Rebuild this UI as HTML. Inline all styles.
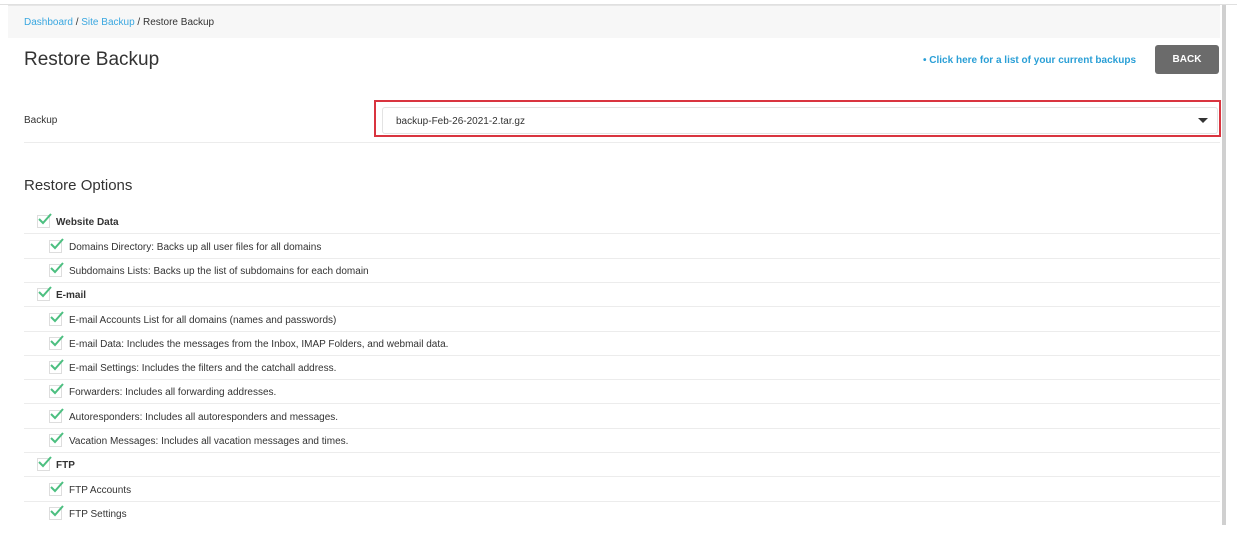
<!DOCTYPE html>
<html><head><meta charset="utf-8"><style>
body{margin:0;width:1237px;height:554px;background:#fff;font-family:"Liberation Sans",sans-serif;position:relative;overflow:hidden;color:#333}
.a{position:absolute}
.bc{left:8px;top:5px;width:1212px;height:32px;background:#f7f7f7;border-top:1px solid #e6e6e6}
.bc span{position:absolute;left:16px;top:11px;font-size:10px;color:#333}
.bc b{font-weight:normal;color:#3aa7e0}
.row{position:absolute;left:24px;width:1196px;height:24px;border-bottom:1px solid #ececec;font-size:10px;color:#333}
.cb{position:absolute;top:6px;width:11px;height:11px;border:1px solid #ddd;background:#fff}
.cb svg{position:absolute;left:0;top:-3px}
.row .t{position:absolute;top:8px}
</style></head><body>
<div class="a" style="left:0;top:4px;width:1237px;height:1px;background:#e0e0e0"></div>
<div class="a bc"><span><b>Dashboard</b> / <b>Site Backup</b> / Restore Backup</span></div>
<div class="a" style="left:1222px;top:5px;width:4px;height:520px;background:#d0d0d0"></div>
<div class="a" style="left:24px;top:49px;font-size:19px;color:#333">Restore Backup</div>
<div class="a" style="left:923px;top:55px;font-size:10px;font-weight:bold;color:#2a9fd6">• Click here for a list of your current backups</div>
<div class="a" style="left:1155px;top:45px;width:64px;height:29px;background:#6b6b6b;border-radius:3px;color:#fff;font-size:10px;font-weight:bold;text-align:center;line-height:29px">BACK</div>
<div class="a" style="left:24px;top:115px;font-size:10px">Backup</div>
<div class="a" style="left:24px;top:142px;width:1196px;height:1px;background:#ececec"></div>
<div class="a" style="left:374px;top:100px;width:847px;height:37px;border:2px solid #d9343f;box-sizing:border-box"></div>
<div class="a" style="left:382px;top:107px;width:836px;height:27px;border:1px solid #e3e3e3;border-radius:3px;box-sizing:border-box"></div>
<div class="a" style="left:396px;top:116px;font-size:10px">backup-Feb-26-2021-2.tar.gz</div>
<div class="a" style="left:1198px;top:118px;width:0;height:0;border-left:5px solid transparent;border-right:5px solid transparent;border-top:5px solid #333"></div>
<div class="a" style="left:24px;top:177px;font-size:15px;color:#333">Restore Options</div>
<div class="row" style="top:209px"><div class="cb" style="left:13px"><svg width="14" height="12"><path d="M1 6l4 4 8-9" stroke="#4cbf80" stroke-width="2" fill="none"/></svg></div><span class="t" style="left:32px;font-weight:bold">Website Data</span></div>
<div class="row" style="top:234px"><div class="cb" style="left:25px"><svg width="14" height="12"><path d="M1 6l4 4 8-9" stroke="#4cbf80" stroke-width="2" fill="none"/></svg></div><span class="t" style="left:45px">Domains Directory: Backs up all user files for all domains</span></div>
<div class="row" style="top:258px"><div class="cb" style="left:25px"><svg width="14" height="12"><path d="M1 6l4 4 8-9" stroke="#4cbf80" stroke-width="2" fill="none"/></svg></div><span class="t" style="left:45px">Subdomains Lists: Backs up the list of subdomains for each domain</span></div>
<div class="row" style="top:282px"><div class="cb" style="left:13px"><svg width="14" height="12"><path d="M1 6l4 4 8-9" stroke="#4cbf80" stroke-width="2" fill="none"/></svg></div><span class="t" style="left:32px;font-weight:bold">E-mail</span></div>
<div class="row" style="top:307px"><div class="cb" style="left:25px"><svg width="14" height="12"><path d="M1 6l4 4 8-9" stroke="#4cbf80" stroke-width="2" fill="none"/></svg></div><span class="t" style="left:45px">E-mail Accounts List for all domains (names and passwords)</span></div>
<div class="row" style="top:331px"><div class="cb" style="left:25px"><svg width="14" height="12"><path d="M1 6l4 4 8-9" stroke="#4cbf80" stroke-width="2" fill="none"/></svg></div><span class="t" style="left:45px">E-mail Data: Includes the messages from the Inbox, IMAP Folders, and webmail data.</span></div>
<div class="row" style="top:355px"><div class="cb" style="left:25px"><svg width="14" height="12"><path d="M1 6l4 4 8-9" stroke="#4cbf80" stroke-width="2" fill="none"/></svg></div><span class="t" style="left:45px">E-mail Settings: Includes the filters and the catchall address.</span></div>
<div class="row" style="top:379px"><div class="cb" style="left:25px"><svg width="14" height="12"><path d="M1 6l4 4 8-9" stroke="#4cbf80" stroke-width="2" fill="none"/></svg></div><span class="t" style="left:45px">Forwarders: Includes all forwarding addresses.</span></div>
<div class="row" style="top:404px"><div class="cb" style="left:25px"><svg width="14" height="12"><path d="M1 6l4 4 8-9" stroke="#4cbf80" stroke-width="2" fill="none"/></svg></div><span class="t" style="left:45px">Autoresponders: Includes all autoresponders and messages.</span></div>
<div class="row" style="top:428px"><div class="cb" style="left:25px"><svg width="14" height="12"><path d="M1 6l4 4 8-9" stroke="#4cbf80" stroke-width="2" fill="none"/></svg></div><span class="t" style="left:45px">Vacation Messages: Includes all vacation messages and times.</span></div>
<div class="row" style="top:452px"><div class="cb" style="left:13px"><svg width="14" height="12"><path d="M1 6l4 4 8-9" stroke="#4cbf80" stroke-width="2" fill="none"/></svg></div><span class="t" style="left:32px;font-weight:bold">FTP</span></div>
<div class="row" style="top:477px"><div class="cb" style="left:25px"><svg width="14" height="12"><path d="M1 6l4 4 8-9" stroke="#4cbf80" stroke-width="2" fill="none"/></svg></div><span class="t" style="left:45px">FTP Accounts</span></div>
<div class="row" style="top:501px;border-bottom:none"><div class="cb" style="left:25px"><svg width="14" height="12"><path d="M1 6l4 4 8-9" stroke="#4cbf80" stroke-width="2" fill="none"/></svg></div><span class="t" style="left:45px">FTP Settings</span></div>
</body></html>
